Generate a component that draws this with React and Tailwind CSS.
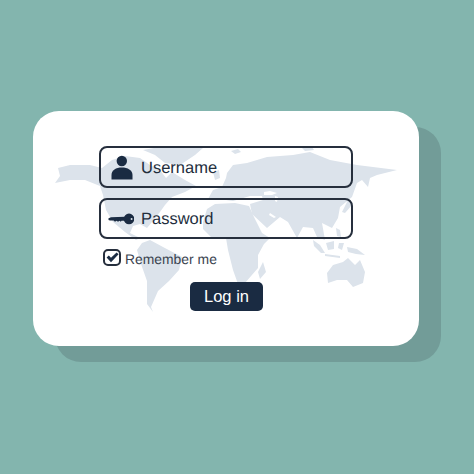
const UserIcon = () => (
  <svg width="22" height="25" viewBox="0 0 22 25" className="shrink-0">
    <circle cx="10.8" cy="6" r="5.2" fill="#1a2b42" />
    <path d="M0.5 24.5 L0.5 20 C0.5 15 5 12.5 10.8 12.5 C16.6 12.5 21.5 15 21.5 20 L21.5 24.5 Z" fill="#1a2b42" />
  </svg>
);

const KeyIcon = () => (
  <svg width="26" height="12" viewBox="0 0 26 12" className="shrink-0">
    <path d="M0.5 5.2 L3 4.2 L17 3.8 L17 7.8 L13.5 7.8 L12.8 8.8 L11.6 7.8 L10 8.8 L8.6 7.8 L7 8.8 L5.6 7.6 L2 7.4 L0.5 7 Z" fill="#1a2b42" />
    <path fillRule="evenodd" d="M21 0.6 A5.3 5.3 0 1 1 21 11.2 A5.3 5.3 0 1 1 21 0.6 Z M23.6 4.9 A1 1 0 1 0 23.6 6.9 A1 1 0 1 0 23.6 4.9 Z" fill="#1a2b42" />
  </svg>
);

const CheckMark = () => (
  <svg width="13" height="11" viewBox="0 0 13 11" className="shrink-0">
    <path d="M0.6 5.6 L2.8 3.6 L5 5.8 L10.6 0.4 L12.6 2.2 L5 10.2 Z" fill="#1a2b42" />
  </svg>
);

const WorldMap = () => (
  <svg viewBox="33 111 386 235" className="absolute inset-0 w-full h-full blur-[0.5px]" fill="#dce3eb">
    {/* north america + greenland */}
    <polygon points="55,183 60,176 58,168 70,165 90,165 102,168 112,160 125,156 140,158 150,165 160,170 166,178 172,172 185,180 196,186 185,192 172,197 165,205 160,212 152,222 147,228 140,224 133,226 130,233 140,238 136,240 125,232 113,222 106,210 103,195 100,186 85,180 70,180" />
    <polygon points="143,150 165,146 203,148 195,155 180,165 165,163 155,155" />
    {/* south america */}
    <polygon points="142,243 150,240 163,247 182,257 179,270 169,281 158,291 151,307 153,312 147,304 147,281 141,264 137,250" />
    {/* africa + madagascar */}
    <polygon points="203,222 207,209 215,204 235,203 249,206 254,217 262,233 270,238 264,244 258,255 258,268 245,283 238,284 233,270 228,250 226,238 212,238 203,229" />
    <polygon points="263,262 266,272 260,279 258,272" />
    {/* eurasia */}
    <polygon points="208,199 213,190 222,187 226,178 227,173 233,165 247,163 267,157 293,155 310,152 330,160 357,165 397,170 377,175 370,178 368,187 362,180 357,183 352,197 340,207 338,218 332,228 322,223 325,240 317,237 313,228 303,227 297,238 288,222 280,217 267,228 252,214 250,204 263,200 262,196 250,196 240,199 233,201 226,200" />
    {/* inland seas */}
    <polygon points="264,192 270,191 277,193 272,195 264,195" fill="#ffffff" />
    <polygon points="275,196 278,197 277,202 275,201" fill="#ffffff" />
    <polygon points="270,213 276,217 274,218 269,215" fill="#ffffff" />
    <polygon points="213,172 219,170 220,178 215,180" />
    <polygon points="231,151 238,149 241,152 235,154" />
    <polygon points="302,148 312,147 314,150 305,151" />
    <polygon points="349,198 352,205 345,213 342,212" />
    {/* islands */}
    <polygon points="313,240 320,245 325,253 321,253 314,246" />
    <polygon points="326,243 334,241 334,249 328,250" />
    <polygon points="336,228 340,230 341,237 337,236" />
    <polygon points="339,243 344,243 342,250 338,248" />
    <polygon points="347,247 357,249 365,255 356,254 348,252" />
    <polygon points="325,254 340,256 340,258 325,256" />
    {/* australia */}
    <polygon points="327,273 333,265 343,262 348,258 355,265 360,260 365,272 363,283 353,287 347,280 337,280 328,283" />
  </svg>
);

export default function App() {
  return (
    <div className="w-[474px] h-[474px] bg-[#83b5ae] pl-[33px] pt-[111px] font-['Liberation_Sans',Arial,sans-serif] overflow-hidden [text-rendering:geometricPrecision]">
      <div className="relative w-[386px] h-[235px] bg-white rounded-[26px] shadow-[22px_16px_0_0_#729c98]">
        <WorldMap />
        <div className="relative flex flex-col pl-[66px] pt-[35px]">
          <div className="flex items-center w-[254px] h-[42px] pl-[10px] gap-[8px] border-2 border-[#262f3d] rounded-[8px] text-[16.5px] text-[#222d3c]">
            <UserIcon />
            <span className="pt-[2px]">Username</span>
          </div>
          <div className="flex items-center w-[254px] h-[41px] mt-[10px] pl-[7px] gap-[7px] border-2 border-[#262f3d] rounded-[8px] text-[16.5px] text-[#222d3c]">
            <KeyIcon />
            <span className="pt-[2px]">Password</span>
          </div>
          <div className="flex items-center h-[17px] mt-[10px] ml-[4px] gap-[4px]">
            <div className="flex items-center justify-center w-[18px] h-[17px] border-2 border-[#262f3d] rounded-[5px]">
              <CheckMark />
            </div>
            <span className="text-[13.9px] text-[#3a4350] pt-[3px]">Remember me</span>
          </div>
          <button className="self-start flex items-center justify-center w-[73px] h-[29px] mt-[16px] ml-[91px] bg-[#1a2b42] rounded-[5px] text-[16.5px] text-white">
            Log in
          </button>
        </div>
      </div>
    </div>
  );
}
